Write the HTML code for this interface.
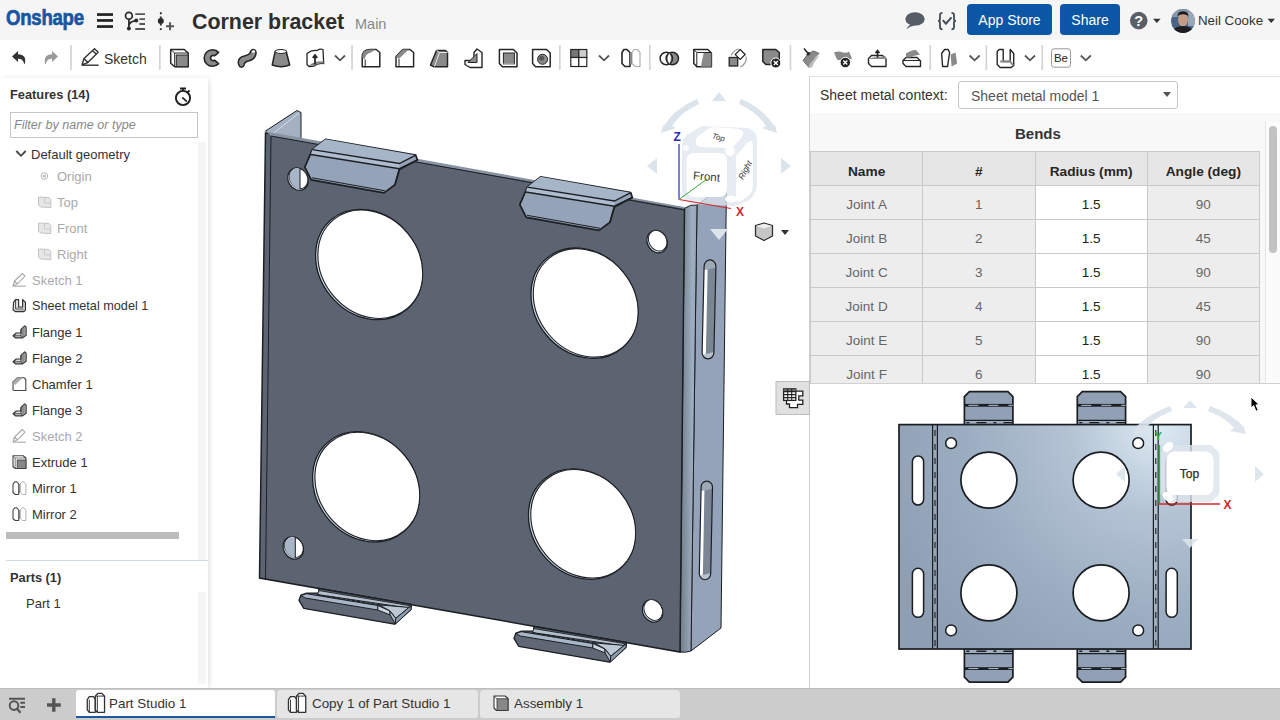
<!DOCTYPE html>
<html><head><meta charset="utf-8">
<style>
*{box-sizing:border-box;margin:0;padding:0}
html,body{width:1280px;height:720px;overflow:hidden;background:#fff;font-family:"Liberation Sans",sans-serif;color:#333}
.a{position:absolute}
#hdr{left:0;top:0;width:1280px;height:40px;background:#f5f5f5}
#tb{left:0;top:40px;width:1280px;height:38px;background:#fff}
.sep{position:absolute;top:45px;width:2px;height:25px;background:#dcdcdc}
.btn{position:absolute;top:4px;height:31px;background:#0c56a6;border-radius:4px;color:#fff;font-size:14px;line-height:33px;text-align:center}
#lp{left:0;top:78px;width:208px;height:610px;background:#fff;box-shadow:2px 0 5px -1px rgba(0,0,0,.14)}
.fi{position:absolute;left:0;font-size:13px;white-space:nowrap;color:#333}
.fi.g{color:#aaa}
#rp{left:809px;top:76px;width:471px;height:612px;background:#fff;border-left:1px solid #d0d0d0;border-top:1px solid #e2e2e2}
table{border-collapse:collapse;position:absolute;left:810px;top:151px;table-layout:fixed}
td,th{border:1px solid #c9c9c9;height:34px;text-align:center;font-size:13.5px;color:#666;background:#ededed;padding:3px 0 0 0;overflow:hidden}
th{background:#e6e6e6;color:#262626;font-weight:bold;font-size:13.7px;padding-top:5px}
td.w{background:#fff;color:#222}
#bb{left:0;top:688px;width:1280px;height:32px;background:#cccccc;border-top:1.5px solid #bdbdbd}
.tab{position:absolute;top:690px;height:28px;background:#e6e6e6;border-radius:4px 4px 3px 3px;font-size:13.4px;color:#333;line-height:27px}
</style></head><body>
<!-- header -->
<div class="a" id="hdr"></div>
<div class="a" style="left:6px;top:5px;font-size:22px;font-weight:bold;color:#18569f;-webkit-text-stroke:.7px #18569f;transform:scaleX(.845);transform-origin:0 0;letter-spacing:-0.3px">Onshape</div>
<div class="a" style="left:192px;top:10px;font-size:21.4px;font-weight:bold;color:#2e2e2e">Corner bracket</div>
<div class="a" style="left:355px;top:16px;font-size:14.5px;color:#888">Main</div>
<div class="btn" style="left:967px;width:85px">App Store</div>
<div class="btn" style="left:1060px;width:60px">Share</div>
<div class="a" style="left:1198px;top:12.5px;font-size:13.3px;color:#333">Neil Cooke</div>

<!-- toolbar -->
<div class="a" id="tb"></div>
<div class="a" style="left:104px;top:50.5px;font-size:14px;color:#333">Sketch</div>

<svg class="a" style="left:0;top:0" width="1280" height="720" viewBox="0 0 1280 720"><polygon points="265.5,131.0 297.0,110.5 301.0,112.5 301.0,142.0 271.0,136.0" fill="#a3b1c3" stroke="#1c1f24" stroke-width="1"/>
<line x1="270" y1="136" x2="299" y2="113" stroke="#d5dde6" stroke-width="1"/>
<polygon points="697.0,205.0 726.5,183.0 721.0,628.0 691.0,651.0" fill="#94a3b9" stroke="#1c1f24" stroke-width="1"/>
<defs><linearGradient id="bend" x1="0" x2="1" y1="0" y2="0"><stop offset="0" stop-color="#6e7b8a"/><stop offset=".75" stop-color="#9fafc1"/><stop offset="1" stop-color="#93a3b6"/></linearGradient><linearGradient id="rfl" x1="0" x2="1" y1="0" y2="0"><stop offset="0" stop-color="#8f9db0"/><stop offset="1" stop-color="#9ba9bb"/></linearGradient></defs>
<path d="M684.5,208.5 Q690,204 697,205 L691,651 Q685,653 680,652 Z" fill="url(#bend)" stroke="#1c1f24" stroke-width="1"/>
<clipPath id="sl1"><path d="M704.1,266.4 A5.9,6.490000000000001 0 0 1 715.9,266.4 L713.9,352.40000000000003 A5.9,6.490000000000001 0 0 1 702.1,352.40000000000003 Z"/></clipPath><path d="M704.1,266.4 A5.9,6.490000000000001 0 0 1 715.9,266.4 L713.9,352.40000000000003 A5.9,6.490000000000001 0 0 1 702.1,352.40000000000003 Z" fill="#fff"/><g clip-path="url(#sl1)"><polygon points="707.8,260.5 717.9,260.5 715.9,358.3 705.8,358.3" fill="#7b8694"/><polygon points="702.1,260.5 717.9,260.5 717.9,267.4 702.1,270.4" fill="#9ea9b6"/><polygon points="700.1,358.3 715.9,358.3 715.9,351.40000000000003 700.1,355.40000000000003" fill="#b8c2cd"/></g><path d="M704.1,266.4 A5.9,6.490000000000001 0 0 1 715.9,266.4 L713.9,352.40000000000003 A5.9,6.490000000000001 0 0 1 702.1,352.40000000000003 Z" fill="none" stroke="#1c1f24" stroke-width="1.2"/>
<clipPath id="sl2"><path d="M701.0999999999999,487.4 A5.7,6.2700000000000005 0 0 1 712.5,487.4 L710.7,573.5 A5.7,6.2700000000000005 0 0 1 699.3,573.5 Z"/></clipPath><path d="M701.0999999999999,487.4 A5.7,6.2700000000000005 0 0 1 712.5,487.4 L710.7,573.5 A5.7,6.2700000000000005 0 0 1 699.3,573.5 Z" fill="#fff"/><g clip-path="url(#sl2)"><polygon points="704.5999999999999,481.7 714.5,481.7 712.7,579.2 702.8,579.2" fill="#7b8694"/><polygon points="699.0999999999999,481.7 714.5,481.7 714.5,488.4 699.0999999999999,491.4" fill="#9ea9b6"/><polygon points="697.3,579.2 712.7,579.2 712.7,572.5 697.3,576.5" fill="#b8c2cd"/></g><path d="M701.0999999999999,487.4 A5.7,6.2700000000000005 0 0 1 712.5,487.4 L710.7,573.5 A5.7,6.2700000000000005 0 0 1 699.3,573.5 Z" fill="none" stroke="#1c1f24" stroke-width="1.2"/>
<polygon points="265.5,133.0 684.5,208.5 680.0,652.0 259.5,578.0" fill="#5b6470" stroke="#1c1f24" stroke-width="1.5"/>
<line x1="271" y1="136" x2="265.5" y2="580" stroke="#1c1f24" stroke-width="1"/>
<polygon points="266.0,131.5 684.0,207.0 684.5,209.0 271.0,136.0" fill="#8893a2"/>
<line x1="271" y1="136" x2="684.5" y2="210" stroke="#1c1f24" stroke-width="1"/>
<g transform="translate(369,264.5)"><ellipse rx="49.6" ry="58.6" transform="rotate(-39.5)" fill="#cdd6e0" stroke="#1c1f24" stroke-width="1.3"/><ellipse rx="48.5" ry="57.7" transform="translate(1.3,-0.3) rotate(-39.5)" fill="#fff" stroke="#1c1f24" stroke-width="1.1"/></g>
<g transform="translate(584.4,303.2)"><ellipse rx="49.6" ry="58.6" transform="rotate(-39.5)" fill="#cdd6e0" stroke="#1c1f24" stroke-width="1.3"/><ellipse rx="48.5" ry="57.7" transform="translate(1.3,-0.3) rotate(-39.5)" fill="#fff" stroke="#1c1f24" stroke-width="1.1"/></g>
<g transform="translate(366,486.8)"><ellipse rx="49.6" ry="58.6" transform="rotate(-39.5)" fill="#cdd6e0" stroke="#1c1f24" stroke-width="1.3"/><ellipse rx="48.5" ry="57.7" transform="translate(1.3,-0.3) rotate(-39.5)" fill="#fff" stroke="#1c1f24" stroke-width="1.1"/></g>
<g transform="translate(581.9,524.1)"><ellipse rx="49.6" ry="58.6" transform="rotate(-39.5)" fill="#cdd6e0" stroke="#1c1f24" stroke-width="1.3"/><ellipse rx="48.5" ry="57.7" transform="translate(1.3,-0.3) rotate(-39.5)" fill="#fff" stroke="#1c1f24" stroke-width="1.1"/></g>
<g transform="translate(298,179.2) rotate(-30)"><ellipse rx="9.8" ry="11.6" fill="#cfd8e2" stroke="#1c1f24" stroke-width="1.2"/><ellipse cx="1" cy="-0.6" rx="8.8" ry="10.8" fill="#fff" stroke="#1c1f24" stroke-width="0.9"/></g>
<clipPath id="c298"><ellipse cx="298.8" cy="178.7" rx="8.8" ry="10.8" transform="rotate(-30 298.8 178.7)"/></clipPath><rect x="286" y="166.2" width="14" height="26" fill="#a8b5c6" clip-path="url(#c298)"/><line x1="300" y1="168.2" x2="300" y2="189.2" stroke="#1c1f24" stroke-width="1"/>
<g transform="translate(657.1,241.7) rotate(-30)"><ellipse rx="9.8" ry="11.6" fill="#cfd8e2" stroke="#1c1f24" stroke-width="1.2"/><ellipse cx="1" cy="-0.6" rx="8.8" ry="10.8" fill="#fff" stroke="#1c1f24" stroke-width="0.9"/></g>
<g transform="translate(293.3,548) rotate(-30)"><ellipse rx="9.8" ry="11.6" fill="#cfd8e2" stroke="#1c1f24" stroke-width="1.2"/><ellipse cx="1" cy="-0.6" rx="8.8" ry="10.8" fill="#fff" stroke="#1c1f24" stroke-width="0.9"/></g>
<clipPath id="c293"><ellipse cx="294.1" cy="547.5" rx="8.8" ry="10.8" transform="rotate(-30 294.1 547.5)"/></clipPath><rect x="281.3" y="535" width="14" height="26" fill="#a8b5c6" clip-path="url(#c293)"/><line x1="295.3" y1="537" x2="295.3" y2="558" stroke="#1c1f24" stroke-width="1"/>
<g transform="translate(652.6,611) rotate(-30)"><ellipse rx="9.8" ry="11.6" fill="#cfd8e2" stroke="#1c1f24" stroke-width="1.2"/><ellipse cx="1" cy="-0.6" rx="8.8" ry="10.8" fill="#fff" stroke="#1c1f24" stroke-width="0.9"/></g>
<polygon points="325.5,139.3 415.8,155.2 417.4,160.0 399.4,169.4 395.0,184.7 384.0,192.9 311.3,179.8 304.8,167.2 312.4,149.7" fill="#94a3b7" stroke="#1c1f24" stroke-width="1.7" stroke-linejoin="round"/>
<polygon points="325.5,139.3 415.8,155.2 399.4,163.5 312.4,149.6" fill="#a7b5c8"/>
<polygon points="312.4,149.6 399.4,163.5 399.4,168.7 310.8,154.5" fill="#afbdcf"/>
<polyline points="312.4,149.6 399.4,163.5 415.8,155.2" fill="none" stroke="#1c1f24" stroke-width="1.4"/>
<polyline points="310.8,154.5 399.4,168.7 417.4,160.0" fill="none" stroke="#1c1f24" stroke-width="1.4"/>
<polyline points="399.4,168.7 395.0,184.7" fill="none" stroke="#1c1f24" stroke-width="1.3"/>
<polyline points="312.0,177.8 385.0,190.8" fill="none" stroke="#1c1f24" stroke-width="1"/>
<polygon points="540.5,176.8 630.8,192.7 632.4,197.5 614.4,206.9 610.0,222.2 599.0,230.4 526.3,217.3 519.8,204.7 527.4,187.2" fill="#94a3b7" stroke="#1c1f24" stroke-width="1.7" stroke-linejoin="round"/>
<polygon points="540.5,176.8 630.8,192.7 614.4,201.0 527.4,187.1" fill="#a7b5c8"/>
<polygon points="527.4,187.1 614.4,201.0 614.4,206.2 525.8,192.0" fill="#afbdcf"/>
<polyline points="527.4,187.1 614.4,201.0 630.8,192.7" fill="none" stroke="#1c1f24" stroke-width="1.4"/>
<polyline points="525.8,192.0 614.4,206.2 632.4,197.5" fill="none" stroke="#1c1f24" stroke-width="1.4"/>
<polyline points="614.4,206.2 610.0,222.2" fill="none" stroke="#1c1f24" stroke-width="1.3"/>
<polyline points="527.0,215.3 600.0,228.3" fill="none" stroke="#1c1f24" stroke-width="1"/>
<polygon points="299.0,600.3 303.8,608.4 394.4,624.2 410.9,609.6 411.5,604.5 318.8,588.5 318.8,593.1 306.6,593.1 300.9,595.0" fill="#5f6874" stroke="#1c1f24" stroke-width="1.3" stroke-linejoin="round"/>
<polygon points="319.0,590.6 409.5,605.6 409.0,608.0 317.4,594.5" fill="#b3bfcd" stroke="#1c1f24" stroke-width="0.9" stroke-linejoin="round"/>
<line x1="317.4" y1="594.8" x2="381" y2="605.3" stroke="#1c1f24" stroke-width="1.4" stroke-dasharray="3,2"/>
<polygon points="300.9,595.5 306.4,593.7 377.8,605.5 377.8,610.0 305.3,598.0" fill="#a9b6c7" stroke="#1c1f24" stroke-width="1" stroke-linejoin="round"/>
<polygon points="379.3,604.9 409.0,607.4 395.8,618.3 390.0,611.0" fill="#bcc7d4" stroke="#1c1f24" stroke-width="1" stroke-linejoin="round"/>
<polygon points="377.8,605.5 390.0,611.0 390.0,614.9 377.8,610.0" fill="#cdd6e0" stroke="#1c1f24" stroke-width="1" stroke-linejoin="round"/>
<polygon points="390.0,611.0 395.8,618.3 395.3,624.0 390.0,614.9" fill="#a7b3c3" stroke="#1c1f24" stroke-width="1" stroke-linejoin="round"/>
<polygon points="409.0,607.4 411.4,606.0 410.9,609.6 395.3,624.2 395.8,618.3" fill="#8e9bab" stroke="#1c1f24" stroke-width="1" stroke-linejoin="round"/>
<polygon points="514.0,638.3 518.8,646.4 609.4,662.2 625.9,647.6 626.5,642.5 533.8,626.5 533.8,631.1 521.6,631.1 515.9,633.0" fill="#5f6874" stroke="#1c1f24" stroke-width="1.3" stroke-linejoin="round"/>
<polygon points="534.0,628.6 624.5,643.6 624.0,646.0 532.4,632.5" fill="#b3bfcd" stroke="#1c1f24" stroke-width="0.9" stroke-linejoin="round"/>
<line x1="532.4" y1="632.8" x2="596" y2="643.3" stroke="#1c1f24" stroke-width="1.4" stroke-dasharray="3,2"/>
<polygon points="515.9,633.5 521.4,631.7 592.8,643.5 592.8,648.0 520.3,636.0" fill="#a9b6c7" stroke="#1c1f24" stroke-width="1" stroke-linejoin="round"/>
<polygon points="594.3,642.9 624.0,645.4 610.8,656.3 605.0,649.0" fill="#bcc7d4" stroke="#1c1f24" stroke-width="1" stroke-linejoin="round"/>
<polygon points="592.8,643.5 605.0,649.0 605.0,652.9 592.8,648.0" fill="#cdd6e0" stroke="#1c1f24" stroke-width="1" stroke-linejoin="round"/>
<polygon points="605.0,649.0 610.8,656.3 610.3,662.0 605.0,652.9" fill="#a7b3c3" stroke="#1c1f24" stroke-width="1" stroke-linejoin="round"/>
<polygon points="624.0,645.4 626.4,644.0 625.9,647.6 610.3,662.2 610.8,656.3" fill="#8e9bab" stroke="#1c1f24" stroke-width="1" stroke-linejoin="round"/><g opacity="1">
<!-- arrows -->
<g fill="#dbe3eb">
<polygon points="712,101 719,92 726,101"/>
<path d="M663,127 Q675,108 697,99 L699,104 Q681,112 672,126 L676,128 L661,133 L664,120 Z"/>
<path d="M775,127 Q763,108 741,99 L739,104 Q757,112 766,126 L762,128 L777,133 L774,120 Z"/>
<polygon points="657,158 647,166 657,174"/>
<polygon points="781,158 791,166 781,174"/>
<polygon points="710,229 719,240 728,229"/>
</g>
<!-- cube frame -->
<path d="M688,134 L702,126 L748,128 Q757,131 757,140 L757,186 Q755,196 748,201 L734,206 L690,204 Q682,200 682,192 L682,146 Q682,138 688,134 Z" fill="#dfe6ed" opacity=".75"/>
<!-- top face -->
<path d="M697,137 L708,129 Q711,127 716,127 L739,129 Q746,131 742,137 L735,145 Q732,148 727,148 L701,147 Q693,146 697,137 Z" fill="#fff"/>
<!-- right face -->
<path d="M736,156 L747,143 Q753,138 753,146 L753,185 Q753,192 748,196 L741,201 Q736,204 736,196 Z" fill="#fff"/>
<!-- front face -->
<rect x="686.5" y="153" width="40.5" height="44" rx="7" fill="#fff"/>
<circle cx="730" cy="151" r="5" fill="#fff"/>
<circle cx="686" cy="148" r="3" fill="#fff" opacity=".8"/>
<ellipse cx="731" cy="199" rx="6" ry="3.5" fill="#fff"/>
<text x="706.5" y="180.5" font-size="11.5" text-anchor="middle" fill="#3a3a3a" font-family="Liberation Sans" transform="rotate(5 706.5 177)">Front</text>
<text x="718.5" y="140" font-size="8" text-anchor="middle" fill="#3a3a3a" font-style="italic" font-family="Liberation Sans" transform="rotate(15 718.5 137)">Top</text>
<text x="745" y="173" font-size="8.5" text-anchor="middle" fill="#3a3a3a" font-style="italic" font-family="Liberation Sans" transform="rotate(-62 745 170)">Right</text>
<!-- axes -->
<line x1="679" y1="144" x2="679" y2="199.5" stroke="#2a2ab0" stroke-width="1.2"/>
<line x1="679" y1="199.5" x2="731" y2="208.5" stroke="#d22a2a" stroke-width="1.2"/>
<line x1="679" y1="199.5" x2="707" y2="179" stroke="#36a836" stroke-width="1"/>
<text x="673.5" y="141" font-size="12" font-weight="bold" fill="#2a2ab0" font-family="Liberation Sans">Z</text>
<text x="736" y="215.5" font-size="12" font-weight="bold" fill="#d22a2a" font-family="Liberation Sans">X</text>
<!-- display mode icon -->
<path d="M755.5,225.5 L764,223 L772.5,225.5 V236 L764,240.5 L755.5,236 Z" fill="#c6c6c6" stroke="#2e2e2e" stroke-width="1.3" stroke-linejoin="round"/>
<path d="M756.5,226 L764,223.8 L771.5,226 L764,228.5 Z" fill="#efefef"/>
<polygon points="781,230 789,230 785,235" fill="#333"/>
</g>
</svg>
<!-- left panel -->
<div class="a" id="lp">
 <div class="fi" style="left:10px;top:9px;font-weight:bold;font-size:12.8px;color:#333">Features (14)</div>
 <div class="a" style="left:10px;top:34px;width:188px;height:26px;border:1px solid #c6c6c6;background:#fff"></div>
 <div class="fi" style="left:14px;top:40px;font-style:italic;font-size:12.6px;color:#888">Filter by name or type</div>
 <div class="a" style="left:198px;top:64px;width:8px;height:418px;background:#f5f5f5"></div>
 <div class="fi" style="left:31px;top:69px">Default geometry</div>
 <div class="fi g" style="left:57px;top:91px">Origin</div>
 <div class="fi g" style="left:57px;top:117px">Top</div>
 <div class="fi g" style="left:57px;top:143px">Front</div>
 <div class="fi g" style="left:57px;top:169px">Right</div>
 <div class="fi g" style="left:32px;top:195px">Sketch 1</div>
 <div class="fi" style="left:32px;top:221px;font-size:12.7px">Sheet metal model 1</div>
 <div class="fi" style="left:32px;top:247px">Flange 1</div>
 <div class="fi" style="left:32px;top:273px">Flange 2</div>
 <div class="fi" style="left:32px;top:299px">Chamfer 1</div>
 <div class="fi" style="left:32px;top:325px">Flange 3</div>
 <div class="fi g" style="left:32px;top:351px">Sketch 2</div>
 <div class="fi" style="left:32px;top:377px">Extrude 1</div>
 <div class="fi" style="left:32px;top:403px">Mirror 1</div>
 <div class="fi" style="left:32px;top:429px">Mirror 2</div>
 <div class="a" style="left:6px;top:454px;width:173px;height:7px;background:#bdbdbd"></div>
 <div class="a" style="left:6px;top:482px;width:202px;height:1px;background:#cfd9e0"></div>
 <div class="fi" style="left:10px;top:492px;font-weight:bold;font-size:12.8px">Parts (1)</div>
 <div class="fi" style="left:26px;top:518px">Part 1</div>
 <div class="a" style="left:198px;top:514px;width:8px;height:92px;background:#f5f5f5"></div>
</div>

<!-- right panel -->
<div class="a" id="rp"></div>
<div class="a" style="left:820px;top:87px;font-size:14px;color:#333">Sheet metal context:</div>
<div class="a" style="left:958px;top:81px;width:220px;height:28px;border:1px solid #c8c8c8;border-radius:3px;background:#fff"></div>
<div class="a" style="left:971px;top:88px;font-size:14px;color:#555">Sheet metal model 1</div>
<div class="a" style="left:810px;top:113px;width:470px;height:270px;background:#f8f8f8"></div><div class="a" style="left:1265px;top:122px;width:15px;height:261px;background:#fbfbfb;border-left:1px solid #e6e6e6"></div><div class="a" style="left:1163px;top:92px;width:0;height:0;border-left:4px solid transparent;border-right:4px solid transparent;border-top:5.5px solid #555"></div>
<div class="a" style="left:1015px;top:125px;font-size:15px;font-weight:bold;color:#333">Bends</div>
<div class="a" style="left:810px;top:151px;width:450px;height:232px;overflow:hidden">
<table style="left:0;top:0;width:450px">
<tr><th>Name</th><th>#</th><th>Radius (mm)</th><th>Angle (deg)</th></tr>
<tr><td>Joint A</td><td>1</td><td class="w">1.5</td><td>90</td></tr>
<tr><td>Joint B</td><td>2</td><td class="w">1.5</td><td>45</td></tr>
<tr><td>Joint C</td><td>3</td><td class="w">1.5</td><td>90</td></tr>
<tr><td>Joint D</td><td>4</td><td class="w">1.5</td><td>45</td></tr>
<tr><td>Joint E</td><td>5</td><td class="w">1.5</td><td>90</td></tr>
<tr><td>Joint F</td><td>6</td><td class="w">1.5</td><td>90</td></tr>
<tr><td>Joint G</td><td>7</td><td class="w">1.5</td><td>90</td></tr>
</table></div>
<div class="a" style="left:1269px;top:126px;width:8px;height:127px;background:#c2c2c2;border-radius:4px"></div>
<div class="a" style="left:810px;top:383px;width:470px;height:1px;background:#d0d0d0"></div>

<svg class="a" style="left:0;top:0" width="1280" height="720" viewBox="0 0 1280 720"><defs><radialGradient id="fpg" gradientUnits="userSpaceOnUse" cx="1160" cy="425" r="300"><stop offset="0" stop-color="#dcebf3"/><stop offset=".3" stop-color="#b4c3d4"/><stop offset=".65" stop-color="#9badc1"/><stop offset="1" stop-color="#8e9eb3"/></radialGradient><linearGradient id="tabg" x1="0" x2="1" y1="0" y2="0"><stop offset="0" stop-color="#8c9bb0"/><stop offset="1" stop-color="#a6b4c6"/></linearGradient></defs>
<g>
<path d="M964.4,424.6 V396.7 L969.4,391.7 H1007.9 L1012.9,396.7 V424.6 Z" fill="#91a0b5" stroke="#1a1d22" stroke-width="1.7"/><rect x="964.4" y="403.9" width="48.5" height="2.8" fill="#1a1d22"/><line x1="968.4" x2="1012.9" y1="405.3" y2="405.3" stroke="#b9c4d2" stroke-width="1" stroke-dasharray="10,10"/><line x1="964.4" x2="1012.9" y1="420.3" y2="420.3" stroke="#1a1d22" stroke-width="1.2"/><rect x="965.1999999999999" y="421.09999999999997" width="46.9" height="3" fill="#b5c0ce" opacity=".5"/><line x1="966.4" x2="1012.9" y1="422.59999999999997" y2="422.59999999999997" stroke="#1a1d22" stroke-width="1.4" stroke-dasharray="3,7,10,7"/>
<path d="M1077.3,424.6 V396.7 L1082.3,391.7 H1120.6 L1125.6,396.7 V424.6 Z" fill="#91a0b5" stroke="#1a1d22" stroke-width="1.7"/><rect x="1077.3" y="403.9" width="48.299999999999955" height="2.8" fill="#1a1d22"/><line x1="1081.3" x2="1125.6" y1="405.3" y2="405.3" stroke="#b9c4d2" stroke-width="1" stroke-dasharray="10,10"/><line x1="1077.3" x2="1125.6" y1="420.3" y2="420.3" stroke="#1a1d22" stroke-width="1.2"/><rect x="1078.1" y="421.09999999999997" width="46.69999999999995" height="3" fill="#b5c0ce" opacity=".5"/><line x1="1079.3" x2="1125.6" y1="422.59999999999997" y2="422.59999999999997" stroke="#1a1d22" stroke-width="1.4" stroke-dasharray="3,7,10,7"/>
<path d="M964.4,649 V677.2 L969.4,682.2 H1007.9 L1012.9,677.2 V649 Z" fill="#91a0b5" stroke="#1a1d22" stroke-width="1.7"/><rect x="964.4" y="667.2" width="48.5" height="2.8" fill="#1a1d22"/><line x1="968.4" x2="1012.9" y1="668.6" y2="668.6" stroke="#b9c4d2" stroke-width="1" stroke-dasharray="10,10"/><line x1="964.4" x2="1012.9" y1="653.6" y2="653.6" stroke="#1a1d22" stroke-width="1.2"/><rect x="965.1999999999999" y="649.8000000000001" width="46.9" height="3" fill="#b5c0ce" opacity=".5"/><line x1="966.4" x2="1012.9" y1="651.3000000000001" y2="651.3000000000001" stroke="#1a1d22" stroke-width="1.4" stroke-dasharray="3,7,10,7"/>
<path d="M1077.3,649 V677.2 L1082.3,682.2 H1120.6 L1125.6,677.2 V649 Z" fill="#91a0b5" stroke="#1a1d22" stroke-width="1.7"/><rect x="1077.3" y="667.2" width="48.299999999999955" height="2.8" fill="#1a1d22"/><line x1="1081.3" x2="1125.6" y1="668.6" y2="668.6" stroke="#b9c4d2" stroke-width="1" stroke-dasharray="10,10"/><line x1="1077.3" x2="1125.6" y1="653.6" y2="653.6" stroke="#1a1d22" stroke-width="1.2"/><rect x="1078.1" y="649.8000000000001" width="46.69999999999995" height="3" fill="#b5c0ce" opacity=".5"/><line x1="1079.3" x2="1125.6" y1="651.3000000000001" y2="651.3000000000001" stroke="#1a1d22" stroke-width="1.4" stroke-dasharray="3,7,10,7"/>
<rect x="899" y="424.6" width="292" height="224.4" fill="url(#fpg)" stroke="#1a1d22" stroke-width="1.7"/>
<line x1="932.6" x2="932.6" y1="424.6" y2="649" stroke="#1a1d22" stroke-width="1.2"/>
<line x1="937.4" x2="937.4" y1="424.6" y2="649" stroke="#1a1d22" stroke-width="1.2"/>
<line x1="1153.4" x2="1153.4" y1="424.6" y2="649" stroke="#1a1d22" stroke-width="1.2"/>
<line x1="1158.2" x2="1158.2" y1="424.6" y2="649" stroke="#1a1d22" stroke-width="1.2"/>
<line x1="935" x2="935" y1="430" y2="649" stroke="#1a1d22" stroke-width="1.1" stroke-dasharray="6,8"/>
<line x1="1155.8" x2="1155.8" y1="430" y2="649" stroke="#1a1d22" stroke-width="1.1" stroke-dasharray="6,8"/>
<circle cx="988.9" cy="480.1" r="28" fill="#fff" stroke="#1a1d22" stroke-width="1.7"/>
<circle cx="988.9" cy="592.9" r="28" fill="#fff" stroke="#1a1d22" stroke-width="1.7"/>
<circle cx="1101.1" cy="480.1" r="28" fill="#fff" stroke="#1a1d22" stroke-width="1.7"/>
<circle cx="1101.1" cy="592.9" r="28" fill="#fff" stroke="#1a1d22" stroke-width="1.7"/>
<circle cx="951.1" cy="443.2" r="5.4" fill="#fff" stroke="#1a1d22" stroke-width="1.5"/>
<circle cx="951.1" cy="630.4" r="5.4" fill="#fff" stroke="#1a1d22" stroke-width="1.5"/>
<circle cx="1138.2" cy="443.2" r="5.4" fill="#fff" stroke="#1a1d22" stroke-width="1.5"/>
<circle cx="1138.2" cy="630.4" r="5.4" fill="#fff" stroke="#1a1d22" stroke-width="1.5"/>
<rect x="912.4" y="456.0" width="11.2" height="49" rx="5.6" fill="#fff" stroke="#1a1d22" stroke-width="1.5"/>
<rect x="912.4" y="568.3" width="11.2" height="49" rx="5.6" fill="#fff" stroke="#1a1d22" stroke-width="1.5"/>
<rect x="1166.1000000000001" y="456.0" width="11.2" height="49" rx="5.6" fill="#fff" stroke="#1a1d22" stroke-width="1.5"/>
<rect x="1166.1000000000001" y="568.3" width="11.2" height="49" rx="5.6" fill="#fff" stroke="#1a1d22" stroke-width="1.5"/>
</g><g>
<g fill="#dbe3eb" opacity=".9">
<polygon points="1183,408 1190,400 1197,408"/>
<path d="M1136,427 Q1148,414 1170,406 L1172,411 Q1154,418 1146,428 L1150,431 L1134,434 L1138,421 Z"/>
<path d="M1244,427 Q1232,414 1210,406 L1208,411 Q1226,418 1234,428 L1230,431 L1246,434 L1242,421 Z"/>
<polygon points="1125,466 1116,474 1125,482"/>
<polygon points="1255,466 1264,474 1255,482"/>
<polygon points="1182,539 1190,548 1198,539"/>
</g>
<polygon points="1169,445 1211,445 1219.5,453 1219.5,494 1211,502 1169,502 1160.5,494 1160.5,453" fill="#dde4ec" opacity=".8"/>
<rect x="1166.5" y="451.5" width="47" height="43.5" rx="8" fill="#fff"/>
<ellipse cx="1168" cy="447" rx="6" ry="4" fill="#fff" transform="rotate(-40 1168 447)"/>
<ellipse cx="1168" cy="497" rx="6" ry="4" fill="#fff" transform="rotate(40 1168 497)"/>
<text x="1189.5" y="477.5" font-size="12" text-anchor="middle" fill="#2a2a2a" font-family="Liberation Sans" stroke="#2a2a2a" stroke-width=".25">Top</text>
<line x1="1159.3" y1="445" x2="1159.3" y2="504" stroke="#2fae2f" stroke-width="1.6"/>
<line x1="1158.5" y1="504" x2="1220" y2="504" stroke="#d22a2a" stroke-width="1.3"/>
<text x="1154.5" y="440" font-size="11" font-weight="bold" fill="#2fae2f" font-family="Liberation Sans">Y</text>
<text x="1223.5" y="509" font-size="12" font-weight="bold" fill="#d22a2a" font-family="Liberation Sans">X</text>
</g>
</svg>
<!-- bottom bar -->
<div class="a" id="bb"></div>
<div class="tab" style="left:76px;width:199px;background:#fff;border-radius:3px 3px 0 0;border-bottom:2px solid #1a56a0;padding-left:33px">Part Studio 1</div>
<div class="tab" style="left:277px;width:201px;padding-left:35px">Copy 1 of Part Studio 1</div>
<div class="tab" style="left:480px;width:200px;padding-left:34px">Assembly 1</div>
<svg class="a" style="left:0;top:0;z-index:5" width="1280" height="720" viewBox="0 0 1280 720"><g transform="translate(0,0)"><rect x="97" y="13.2" width="16" height="2.7" fill="#222"/><rect x="97" y="19.1" width="16" height="2.7" fill="#222"/><rect x="97" y="25.2" width="16" height="2.7" fill="#222"/></g>
<g transform="translate(0,0)"><circle cx="128.9" cy="15.7" r="3.4" fill="none" stroke="#2a2a2a" stroke-width="1.7"/><path d="M128.9,19.2 V28.3 M128.9,26 Q129,21.5 136.2,20.6" fill="none" stroke="#2a2a2a" stroke-width="1.7"/><circle cx="128.9" cy="28.4" r="2" fill="#2a2a2a"/><circle cx="136.2" cy="20.6" r="2" fill="#2a2a2a"/><path d="M135.3,14.2 H145 M139.4,19.1 H145 M139.4,24 H145 M135.3,29 H145" stroke="#555" stroke-width="1.8"/></g>
<g transform="translate(0,0)"><path d="M160.8,12.2 V14.2 M160.8,16.6 V18 M160.8,24 V25.4 M160.8,28.2 V30" stroke="#2a2a2a" stroke-width="1.8"/><circle cx="160.8" cy="21" r="3" fill="#2a2a2a"/><path d="M166,26.3 H174 M170,22.3 V30.3" stroke="#555" stroke-width="1.9"/></g>
<g transform="translate(0,0)"><ellipse cx="915" cy="18.9" rx="9.7" ry="6.7" fill="#555d66"/><path d="M906,29.5 Q910,24 912,23 L917,24.5 Q911,26 906,29.5 Z" fill="#555d66"/></g>
<g transform="translate(0,0)"><path d="M942.5,12.8 Q940,12.8 940,15 V19 Q940,20.8 938,20.8 Q940,20.8 940,22.6 V27 Q940,29.3 942.5,29.3" fill="none" stroke="#454c55" stroke-width="1.8"/><path d="M951.5,12.8 Q954,12.8 954,15 V19 Q954,20.8 956,20.8 Q954,20.8 954,22.6 V27 Q954,29.3 951.5,29.3" fill="none" stroke="#454c55" stroke-width="1.8"/><path d="M942.8,20.2 L945.9,23.7 L951.5,17.3" fill="none" stroke="#454c55" stroke-width="2"/></g>
<g transform="translate(0,0)"><circle cx="1138.75" cy="20.6" r="8.8" fill="#5a6068"/><text x="1138.75" y="25.8" font-size="14.5" font-weight="bold" text-anchor="middle" fill="#fff" font-family="Liberation Sans">?</text><polygon points="1153,18.7 1160.6,18.7 1156.8,23" fill="#333"/></g>
<g transform="translate(0,0)"><defs><clipPath id="av"><circle cx="1183" cy="21" r="11.9"/></clipPath></defs><g clip-path="url(#av)"><rect x="1170" y="8" width="26" height="26" fill="#4a6384"/><rect x="1170" y="8" width="26" height="9" fill="#8798ac"/><rect x="1188" y="12" width="8" height="14" fill="#9aa7b5"/><ellipse cx="1183" cy="20" rx="5" ry="6.3" fill="#c39b86"/><path d="M1177.6,17 Q1177,11.5 1183,11.3 Q1189,11.5 1188.4,17 Q1187.5,14.2 1183,14.3 Q1178.5,14.2 1177.6,17Z" fill="#1f1a18"/><path d="M1172,34 Q1173,26 1183,26 Q1193,26 1194,34 Z" fill="#1e1e22"/></g><polygon points="1267.5,18.7 1275,18.7 1271.25,23" fill="#333"/></g>
<g transform="translate(0,0)"><path d="M12,56.5 L18,51 V54.3 Q25.5,54.3 25.3,61 Q25.2,63 24.2,64.5 Q23.5,58.6 18,58.8 V62 Z" fill="#333"/></g>
<g transform="translate(0,0)"><path d="M58,56.5 L52,51 V54.3 Q44.5,54.3 44.7,61 Q44.8,63 45.8,64.5 Q46.5,58.6 52,58.8 V62 Z" fill="#999"/></g>
<g transform="translate(0,0)"><path d="M82,65 L84,58.5 L94.5,48.7 L98.2,52.3 L87.8,62.6 Z M84,58.5 L87.8,62.6 M92.5,50.6 L96.3,54.3" fill="none" stroke="#333" stroke-width="1.4" stroke-linejoin="round"/><path d="M82,65.2 H98.6" stroke="#333" stroke-width="1.4"/></g>
<rect x="70.10000000000001" y="45" width="1.7" height="25" fill="#d4d4d4"/>
<rect x="159.0" y="45" width="1.7" height="25" fill="#d4d4d4"/>
<rect x="351.2" y="45" width="1.7" height="25" fill="#d4d4d4"/>
<rect x="559.0" y="45" width="1.7" height="25" fill="#d4d4d4"/>
<rect x="648.95" y="45" width="1.7" height="25" fill="#d4d4d4"/>
<rect x="789.6" y="45" width="1.7" height="25" fill="#d4d4d4"/>
<rect x="929.4000000000001" y="45" width="1.7" height="25" fill="#d4d4d4"/>
<rect x="985.5" y="45" width="1.7" height="25" fill="#d4d4d4"/>
<rect x="1041.4" y="45" width="1.7" height="25" fill="#d4d4d4"/>
<path d="M335,55.5 L340,60.3 L345,55.5" fill="none" stroke="#555" stroke-width="1.8"/>
<path d="M599,55.5 L604,60.3 L609,55.5" fill="none" stroke="#555" stroke-width="1.8"/>
<path d="M969.6,55.5 L974.6,60.3 L979.6,55.5" fill="none" stroke="#555" stroke-width="1.8"/>
<path d="M1025,55.5 L1030,60.3 L1035,55.5" fill="none" stroke="#555" stroke-width="1.8"/>
<path d="M1080.8,55.5 L1085.8,60.3 L1090.8,55.5" fill="none" stroke="#555" stroke-width="1.8"/>
<g transform="translate(169.7,48.5)"><path d="M1,1 H14.5 L18.5,4.5 V18.2 H5 L1,14.8 Z" fill="#fff" stroke="#262626" stroke-width="1.5" stroke-linejoin="round"/><path d="M1,1 L5,4.5 H18.5 M5,4.5 V18.2" fill="none" stroke="#262626" stroke-width="1"/><rect x="6.6" y="6.5" width="11.8" height="11.7" fill="#8a8a8a" stroke="#262626" stroke-width="1"/></g>
<g transform="translate(0,0)"><path d="M218.6,52.4 A8.3,8.3 0 1 0 218.6,63.6 L214.6,60.2 A2.6,2.6 0 1 1 214.6,55.8 Z" fill="#8a8a8a" stroke="#262626" stroke-width="1.6" stroke-linejoin="round"/></g>
<g transform="translate(237.3,48.5)"><path d="M1.2,15.5 Q0,9 7,7.5 Q11,6.5 12.5,5 Q13.5,1 16,1 Q19.5,1.5 18.5,6 Q17.5,11 11,12.5 Q7.5,13.2 7,15.5 Q6.5,19 3.8,18.6 Q1.8,18 1.2,15.5 Z" fill="#8a8a8a" stroke="#262626" stroke-width="1.5" stroke-linejoin="round"/><ellipse cx="16.2" cy="3" rx="1.6" ry="1.2" fill="#fff"/></g>
<g transform="translate(272.2,48.5)"><path d="M3,3 Q8,0 14,3 L17.5,16.5 Q9,20 0,16.5 Z" fill="#8a8a8a" stroke="#262626" stroke-width="1.5" stroke-linejoin="round"/><ellipse cx="8.7" cy="3" rx="5.7" ry="2" fill="#fff" stroke="#262626" stroke-width="1"/></g>
<g transform="translate(306,48.5)"><path d="M1,5 Q6,1 11,2 Q14,0 17,1 L17.7,15 Q12,14 8,17.5 L3,18 L1,16 Z" fill="#fff" stroke="#262626" stroke-width="1.3" stroke-linejoin="round"/><path d="M3,17.5 Q8,12 17.5,13 V15 Q12,14 8,17.5 Z" fill="#8a8a8a"/><path d="M9,16 V7 M6.8,9.5 L9,6.5 L11.2,9.5" stroke="#262626" stroke-width="1.8" fill="none"/></g>
<g transform="translate(361.2,48.5)"><path d="M1,18.2 V9 Q1,1 9,1 H15 L18.6,4 V18.2 H4 Z" fill="#fff" stroke="#262626" stroke-width="1.5" stroke-linejoin="round"/><path d="M1,9 Q1,1 9,1 H14 L10,4 Q4.5,4.5 3.6,11 Z" fill="#8a8a8a"/><path d="M4,18.2 V11" stroke="#262626" stroke-width="1"/></g>
<g transform="translate(395,48.5)"><path d="M1,18.2 V8 L8,1 H15 L18.6,4 V18.2 H4 Z" fill="#fff" stroke="#262626" stroke-width="1.5" stroke-linejoin="round"/><path d="M1,8 L8,1 H14 L10.5,4 L3.8,10.5 Z" fill="#8a8a8a"/><path d="M4,18.2 V10.5" stroke="#262626" stroke-width="1"/></g>
<g transform="translate(429.5,48.5)"><path d="M1,16.5 L7,2 H16 L18,4 V18.2 H4 Z" fill="#8a8a8a" stroke="#262626" stroke-width="1.5" stroke-linejoin="round"/><path d="M7,2 L10,4 H18 M10,4 L5,18" fill="none" stroke="#e8e8e8" stroke-width="1"/></g>
<g transform="translate(464,48.5)"><path d="M1,12 V16 L6,19 H18 V4 L13,0.5 L10,4 V12 Z" fill="#fff" stroke="#262626" stroke-width="1.4" stroke-linejoin="round"/><path d="M4,14 L13,5 V14 Z" fill="#8a8a8a" stroke="#262626" stroke-width="1"/></g>
<g transform="translate(498.4,48.5)"><path d="M1,1 H15 L18.6,4.5 V18.2 H4 L1,15 Z" fill="#fff" stroke="#262626" stroke-width="1.5" stroke-linejoin="round"/><rect x="5" y="4.5" width="11" height="11" fill="#8a8a8a" stroke="#262626" stroke-width="1"/><path d="M5,15.5 H16" stroke="#ddd" stroke-width="1"/></g>
<g transform="translate(531.6,48.5)"><path d="M1,1 H15 L18.6,4.5 V18.2 H4 L1,15 Z" fill="#fff" stroke="#262626" stroke-width="1.5" stroke-linejoin="round"/><circle cx="11" cy="10.8" r="5" fill="#8a8a8a" stroke="#262626" stroke-width="1"/><circle cx="10" cy="9.8" r="2.5" fill="#555"/></g>
<g transform="translate(570,48.5)"><g stroke="#262626" stroke-width="1.2"><rect x="0.8" y="1" width="8" height="8" fill="#777"/><rect x="8.8" y="1" width="8" height="8" fill="#ccc"/><rect x="0.8" y="9" width="8" height="9" fill="#fff"/><rect x="8.8" y="9" width="8" height="9" fill="#fff"/></g></g>
<g transform="translate(621,48.5)"><path d="M1,4 L3,1 H6 L9,4 V18 H4 L1,15 Z" fill="#fff" stroke="#262626" stroke-width="1.6" stroke-linejoin="round"/><path d="M11,4 L13,1 H16 L19,4 V18 H14 L11,15 Z" fill="#fff" stroke="#aaa" stroke-width="1.1"/><rect x="9" y="4" width="2" height="12" fill="#888"/></g>
<g transform="translate(659.3,48.5)"><circle cx="13" cy="10" r="6.2" fill="#8a8a8a" stroke="#262626" stroke-width="1.5"/><circle cx="7" cy="10" r="6.2" fill="none" stroke="#262626" stroke-width="1.5"/><path d="M10,4.6 Q7,10 10,15.4 Q13,10 10,4.6Z" fill="#fff"/></g>
<g transform="translate(692.8,48.5)"><path d="M1,1 H15 L18.6,4.5 V18.2 H4 L1,15 Z" fill="#fff" stroke="#262626" stroke-width="1.5" stroke-linejoin="round"/><path d="M11,4 H18.6 V18.2 H8 Z" fill="#8a8a8a"/><path d="M1,1 L4,4 H18.6 M4,4 V18" fill="none" stroke="#262626" stroke-width="1"/></g>
<g transform="translate(728.2,48.5)"><rect x="1" y="9" width="8.5" height="8.5" fill="#8a8a8a" stroke="#262626" stroke-width="1.3"/><path d="M12,1 L17,6 L12,11 L7,6 Z" fill="#fff" stroke="#262626" stroke-width="1.2"/><path d="M3,7 Q6,1 11,0.5 M18,8 Q19,15 12,18.5" fill="none" stroke="#999" stroke-width="1.2"/></g>
<g transform="translate(761.8,48.5)"><path d="M1,1 H14 L17.5,4 V16 H4 L1,13 Z" fill="#8a8a8a" stroke="#262626" stroke-width="1.5" stroke-linejoin="round"/><circle cx="14" cy="14.5" r="5" fill="#222" stroke="#fff" stroke-width="1"/><path d="M12,12.5 L16,16.5 M16,12.5 L12,16.5" stroke="#fff" stroke-width="1.4"/></g>
<g transform="translate(801,48.5)"><path d="M2,12 Q6,5 12,2.5 Q15,3 18,5 Q12,9 8,19 Z" fill="#8a8a8a" stroke="#555" stroke-width=".8"/><path d="M7,19 Q11,10 18.5,7 Q13,13 11,19 Z" fill="#bbb"/><path d="M3,0 L8,6 M5.5,6 L8,6 L8,3.5" stroke="#262626" stroke-width="1.5" fill="none"/></g>
<g transform="translate(833,48.5)"><path d="M1,4 Q6,2 10,4 Q14,5 16,3 L19,10 Q14,13 10,11 Q7,12 4,11 Z" fill="#8a8a8a"/><circle cx="12.3" cy="14" r="5.2" fill="#222" stroke="#fff" stroke-width="1"/><path d="M10.3,12 L14.3,16 M14.3,12 L10.3,16" stroke="#fff" stroke-width="1.4"/></g>
<g transform="translate(867.5,48.5)"><path d="M1,10 L4,7 H15 L18.5,10.5 V18 H4 L1,15 Z" fill="#fff" stroke="#262626" stroke-width="1.4" stroke-linejoin="round"/><path d="M1,10 Q8,8 11,8.5 Q14,9 18,7.5 L18.5,10.5 H4 Z" fill="#8a8a8a"/><path d="M10,2 V9 M8,4.5 L10,2 L12,4.5" stroke="#262626" stroke-width="1.6" fill="none"/></g>
<g transform="translate(902,48.5)"><path d="M1,12 L4,9 H15 L18.5,12.5 V18 H4 L1,15 Z" fill="#fff" stroke="#262626" stroke-width="1.4" stroke-linejoin="round"/><path d="M1,12 H18.5" stroke="#262626" stroke-width="1"/><path d="M4,5 Q10,1 14,1.5 L18,6 Q12,7 8,9 L4,9 Z" fill="#8a8a8a"/></g>
<g transform="translate(940.6,48.5)"><path d="M1,5 L4,1 H7.5 L9,4 L7,18 H2 Z" fill="#fff" stroke="#262626" stroke-width="1.4" stroke-linejoin="round"/><path d="M10,6 L15,4 L16.5,15 L11,18 Z" fill="#8a8a8a"/></g>
<g transform="translate(996.2,48.5)"><path d="M1,3 L3,1 H7 V13 H14 V1 L17.5,5 V17 L15,19 H4 L1,16 Z" fill="#fff" stroke="#262626" stroke-width="1.4" stroke-linejoin="round"/><path d="M4,13 H14 L17,17" stroke="#888" stroke-width="1.8" fill="none"/></g>
<g transform="translate(0,0)"><rect x="1051.5" y="48.8" width="19" height="18.4" rx="2.5" fill="#fff" stroke="#999" stroke-width="1"/><text x="1061" y="62.2" font-size="11.5" text-anchor="middle" fill="#222" font-family="Liberation Sans">Be</text></g><g transform="translate(0,0)"><path d="M16.3,151 L21,155.8 L25.7,151" fill="none" stroke="#444" stroke-width="1.8"/></g>
<g transform="translate(0,0)"><circle cx="44.4" cy="176" r="3.3" fill="none" stroke="#b5b5b5" stroke-width="1"/><circle cx="44.4" cy="176" r="1.5" fill="#b5b5b5"/></g>
<g transform="translate(0,0)"><path d="M38.5,197 L49,197.5 L50.8,199.5 V207.5 L40.5,207 L38.5,205 Z" fill="#e6e6e6" stroke="#c4c4c4" stroke-width="1"/><path d="M44.5,198 V203 H50" stroke="#c4c4c4" stroke-width=".8" fill="none"/></g>
<g transform="translate(0,0)"><path d="M38.5,223 L49,223.5 L50.8,225.5 V233.5 L40.5,233 L38.5,231 Z" fill="#e6e6e6" stroke="#c4c4c4" stroke-width="1"/><path d="M44.5,224 V229 H50" stroke="#c4c4c4" stroke-width=".8" fill="none"/></g>
<g transform="translate(0,0)"><path d="M38.5,249 L49,249.5 L50.8,251.5 V259.5 L40.5,259 L38.5,257 Z" fill="#e6e6e6" stroke="#c4c4c4" stroke-width="1"/><path d="M44.5,250 V255 H50" stroke="#c4c4c4" stroke-width=".8" fill="none"/></g>
<g transform="translate(0,0)"><path d="M13,286 L14.6,281 L22.3,273.5 L25,276.2 L17.4,283.8 Z M14.6,281 L17.4,283.8" fill="none" stroke="#aaa" stroke-width="1.1" stroke-linejoin="round"/><path d="M13,286.2 H26" stroke="#aaa" stroke-width="1.1"/></g>
<g transform="translate(0,0)"><path d="M13,442 L14.6,437 L22.3,429.5 L25,432.2 L17.4,439.8 Z M14.6,437 L17.4,439.8" fill="none" stroke="#aaa" stroke-width="1.1" stroke-linejoin="round"/><path d="M13,442.2 H26" stroke="#aaa" stroke-width="1.1"/></g>
<g transform="translate(12.6,299.2)"><path d="M1,3 L3,0.5 H6 V8 H10 V0.5 L12.8,3 V11 L11,12.5 H3 L0.5,10.5 Z" fill="#e6e6e6" stroke="#333" stroke-width="1.2" stroke-linejoin="round"/><path d="M3.2,8.3 H10 L12.2,11.2 H3.2 Z" fill="#999"/><path d="M3,0.5 V10 M10,0.5 V8" stroke="#333" stroke-width=".9"/></g>
<g transform="translate(12.5,325)"><path d="M8.5,4.5 L12.2,0.8 L13.6,2.2 V10.2 L10,12.8 H3 L0.6,10.8 L3.8,8 H8.5 Z" fill="#d9d9d9" stroke="#333" stroke-width="1.2" stroke-linejoin="round"/><path d="M9.2,4.6 L12.3,1.6 V10 L9.5,12.2 Z" fill="#8c8c8c"/><path d="M8.5,4.5 V10.8 H0.6 M8.5,10.8 L10,12.8" fill="none" stroke="#333" stroke-width=".9"/></g>
<g transform="translate(12.5,351)"><path d="M8.5,4.5 L12.2,0.8 L13.6,2.2 V10.2 L10,12.8 H3 L0.6,10.8 L3.8,8 H8.5 Z" fill="#d9d9d9" stroke="#333" stroke-width="1.2" stroke-linejoin="round"/><path d="M9.2,4.6 L12.3,1.6 V10 L9.5,12.2 Z" fill="#8c8c8c"/><path d="M8.5,4.5 V10.8 H0.6 M8.5,10.8 L10,12.8" fill="none" stroke="#333" stroke-width=".9"/></g>
<g transform="translate(12.5,403)"><path d="M8.5,4.5 L12.2,0.8 L13.6,2.2 V10.2 L10,12.8 H3 L0.6,10.8 L3.8,8 H8.5 Z" fill="#d9d9d9" stroke="#333" stroke-width="1.2" stroke-linejoin="round"/><path d="M9.2,4.6 L12.3,1.6 V10 L9.5,12.2 Z" fill="#8c8c8c"/><path d="M8.5,4.5 V10.8 H0.6 M8.5,10.8 L10,12.8" fill="none" stroke="#333" stroke-width=".9"/></g>
<g transform="translate(12.2,377)"><path d="M0.8,13 V5 L5,0.8 H12 L13.6,2.5 V13.5 H2.5 Z" fill="#fff" stroke="#444" stroke-width="1.1" stroke-linejoin="round"/><path d="M0.8,5 L5,0.8 H11 L8,3 L3,8 Z" fill="#aaa"/></g>
<g transform="translate(12.2,455)"><path d="M0.8,0.8 H11 L13.7,3 V13.5 H3 L0.8,11.5 Z" fill="#fff" stroke="#444" stroke-width="1.1" stroke-linejoin="round"/><rect x="5" y="5" width="8.7" height="8.5" fill="#888" stroke="#444" stroke-width=".9"/><path d="M0.8,0.8 L3,3 H13.7 M3,3 V13.5" stroke="#444" stroke-width=".7" fill="none"/></g>
<g transform="translate(12.2,481)"><path d="M0.8,3 L2.5,0.8 H4.5 L6.5,3 V13.5 H3 L0.8,11.5 Z" fill="#fff" stroke="#444" stroke-width="1.1" stroke-linejoin="round"/><path d="M8,3 L9.7,0.8 H11.7 L13.7,3 V13.5 H10 L8,11.5 Z" fill="#fff" stroke="#aaa" stroke-width=".9"/><rect x="6.5" y="3" width="1.5" height="9" fill="#888"/></g>
<g transform="translate(12.2,507)"><path d="M0.8,3 L2.5,0.8 H4.5 L6.5,3 V13.5 H3 L0.8,11.5 Z" fill="#fff" stroke="#444" stroke-width="1.1" stroke-linejoin="round"/><path d="M8,3 L9.7,0.8 H11.7 L13.7,3 V13.5 H10 L8,11.5 Z" fill="#fff" stroke="#aaa" stroke-width=".9"/><rect x="6.5" y="3" width="1.5" height="9" fill="#888"/></g>
<g transform="translate(0,0)"><path d="M9,698.8 H25 M20.3,702.8 H25 M20.3,706.9 H25" stroke="#555" stroke-width="2"/><circle cx="14" cy="705.6" r="4.3" fill="none" stroke="#555" stroke-width="2"/><path d="M17,708.8 L20.5,712.8" stroke="#555" stroke-width="2.2"/></g>
<g transform="translate(0,0)"><path d="M47,705 H60.8 M53.8,698.2 V711.8" stroke="#555" stroke-width="3.4"/></g>
<g transform="translate(86.3,692.5) scale(1.2)"><g transform="translate(0,0)"><path d="M0.8,6 L2.5,3.5 H6 L7.5,5.5 V16.5 H2.5 L0.8,14.5 Z" fill="#fff" stroke="#333" stroke-width="1.1" stroke-linejoin="round"/><path d="M7.5,3 L9.5,0.8 H13 L15.2,3 V16.5 H9.2 L7.5,14.5 Z" fill="#fff" stroke="#333" stroke-width="1.1" stroke-linejoin="round"/><path d="M2.5,6 V16.5 M9.2,3 V16.5 M7.5,3 H15" stroke="#333" stroke-width=".8" fill="none"/></g></g>
<g transform="translate(287.5,692.5) scale(1.2)"><g transform="translate(0,0)"><path d="M0.8,6 L2.5,3.5 H6 L7.5,5.5 V16.5 H2.5 L0.8,14.5 Z" fill="#fff" stroke="#333" stroke-width="1.1" stroke-linejoin="round"/><path d="M7.5,3 L9.5,0.8 H13 L15.2,3 V16.5 H9.2 L7.5,14.5 Z" fill="#fff" stroke="#333" stroke-width="1.1" stroke-linejoin="round"/><path d="M2.5,6 V16.5 M9.2,3 V16.5 M7.5,3 H15" stroke="#333" stroke-width=".8" fill="none"/></g></g>
<g transform="translate(493,695)"><path d="M1,1 H12 L15,3.5 V15.5 H3.5 L1,13 Z" fill="#fff" stroke="#333" stroke-width="1.1" stroke-linejoin="round"/><rect x="4" y="3.8" width="11" height="11.7" fill="#888" stroke="#333" stroke-width=".8"/><path d="M1,1 L4,3.8" stroke="#333" stroke-width=".8"/></g>
<g transform="translate(0,0)"><rect x="776" y="381.5" width="33.5" height="33" fill="#e0e0e0" stroke="#bdbdbd" stroke-width="1"/></g>
<g transform="translate(0,0)"><path d="M795.5,391.2 H802.8 V395.8 H798.8 V400.2 H802.8 V404.3 H797.5 V407.6 H789.5 V404 H786.5 V400.8" fill="#fff" stroke="#222" stroke-width="1.3"/><rect x="783.6" y="388.8" width="12.2" height="11.6" fill="#fff" stroke="#222" stroke-width="1.3"/><rect x="783.6" y="388.8" width="12.2" height="2.6" fill="#6a6a6a"/><path d="M787.7,388.8 V400.4 M791.7,388.8 V400.4 M783.6,391.6 H795.8 M783.6,394.6 H795.8 M783.6,397.6 H795.8" stroke="#222" stroke-width="1.1"/></g><circle cx="183" cy="98" r="7.1" fill="none" stroke="#1e1e1e" stroke-width="1.9"/><path d="M180,88.5 H186 M183,88.5 V91" stroke="#1e1e1e" stroke-width="1.8"/><path d="M187.5,92.5 L189.5,90.5" stroke="#1e1e1e" stroke-width="2"/><path d="M182.3,97.3 L186.8,101.6" stroke="#1e1e1e" stroke-width="1.6"/><path d="M1251,397 V408.2 L1253.6,405.6 L1256,411.3 L1258.3,410.3 L1255.9,404.9 L1259.3,404.8 Z" fill="#000" stroke="#fff" stroke-width="1" stroke-linejoin="round"/></svg>
</body></html>
